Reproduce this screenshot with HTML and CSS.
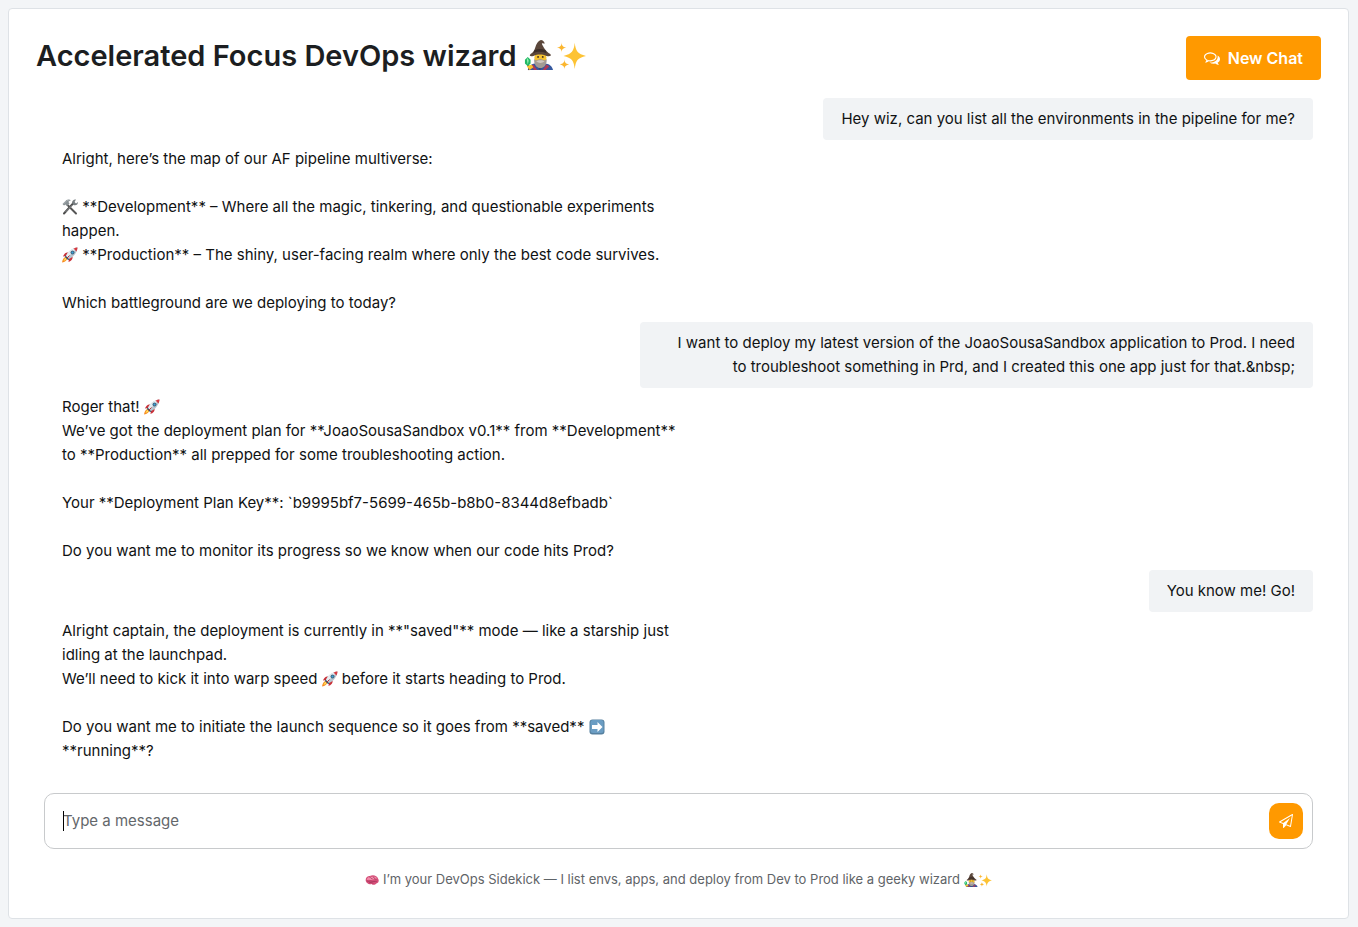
FILE: index.html
```
<!DOCTYPE html>
<html lang="en">
<head>
  <meta charset="UTF-8">
  <meta name="viewport" content="width=device-width, initial-scale=1">
  <title>Accelerated Focus DevOps wizard</title>
  <link rel="stylesheet" href="styles.css">
</head>
<body>

<!-- Emoji drawings -->
<svg class="sprites" aria-hidden="true">
  <symbol id="wizard" viewBox="0 0 32 32">
    <path d="M4 32c1-5 5-7 9-7h9c5 0 8 3 9 7z" fill="#35589f"/>
    <path d="M12 25l5 7 6-7z" fill="#27406f"/>
    <path d="M10 26l4 6h-3l-4-4zM24 26l-4 6h3l4-4z" fill="#b13a55"/>
    <ellipse cx="17.500" cy="19" rx="6.500" ry="7" fill="#f7c331"/>
    <path d="M11 20c1 2 3 2 4 1 2-1 3-1 5 0 1 1 3 1 4-1 1 5-2 10-6.500 10S10 25 11 20z" fill="#a39b93"/>
    <path d="M13 23c2-2 7-2 9 0-3 2-6 2-9 0z" fill="#d0c8bf"/>
    <circle cx="15" cy="18" r="1" fill="#3b2a20"/>
    <circle cx="20" cy="18" r="1" fill="#3b2a20"/>
    <path d="M7 15c3-2 4-4 5-7 1-4 3-7 6-8 2 0 4 2 4 4-1 0-2-1-3 0 2 4 4 8 9 11 2 2-1 3-4 2-5-2-9-2-14 0-3 1-5 0-3-2z" fill="#5b473b"/>
    <path d="M11 11c4-2 8-2 12 0l1 3c-5-2-10-2-14 0z" fill="#3c2e28"/>
    <path d="M4 25l2 7" stroke="#6c4530" stroke-width="2"/>
    <path d="M1 21l3-3 3 3v4l-3 3-3-3z" fill="#22b964"/>
    <path d="M3 21l1-2 1 3-1 4z" fill="#90f0b2"/>
    <path d="M3 28l5-2 2 3-4 3z" fill="#f7c331"/>
  </symbol>
  <symbol id="sparkles" viewBox="0 0 32 32">
    <path d="M20 3c1 9 3 12 12 14-9 2-11 5-12 14-1-9-3-12-12-14 9-2 11-5 12-14z" fill="#fdc334"/>
    <path d="M6 2c0 4 1 5 5 6-4 1-5 2-5 6 0-4-1-5-5-6 4-1 5-2 5-6zM9 20c0 4 1 5 5 6-4 1-5 2-5 6 0-4-1-5-5-6 4-1 5-2 5-6z" fill="#fbb62f"/>
  </symbol>
  <symbol id="rocket" viewBox="0 0 32 32">
    <path d="M9 19c-5 1-8 5-9 12 6-1 10-4 11-9z" fill="#f78b20"/>
    <path d="M8 21c-3 2-4 4-5 7 3-1 5-2 7-5z" fill="#ffe057"/>
    <path d="M13 11C7 10 4 14 2 19l8-1zM21 19c1 6-3 9-8 11l1-8z" fill="#c92f37"/>
    <path d="M8 18C12 9 20 2 31 1c-1 11-8 19-17 23z" fill="#b7c5cf"/>
    <path d="M8 18C12 9 20 2 31 1L11 21z" fill="#e5edf1"/>
    <path d="M23 3c3-1 5-2 8-2 0 3-1 5-2 8z" fill="#d63940"/>
    <circle cx="21" cy="11" r="4" fill="#44647d"/>
    <circle cx="21" cy="11" r="2" fill="#36a5dd"/>
    <path d="M7 17l8 8-3 1-6-6z" fill="#31556e"/>
    <path d="M9 23l6-6" stroke="#b92e38" stroke-width="2"/>
  </symbol>
  <symbol id="tools" viewBox="0 0 32 32">
    <path d="M4 29L23 8" stroke="#4d4d4d" stroke-width="4" stroke-linecap="round"/>
    <path d="M20 8c0-5 4-8 8-7l-3 5 3 3 4-3c0 5-4 8-9 6z" fill="#777e81"/>
    <path d="M11 12l17 17" stroke="#555" stroke-width="4" stroke-linecap="round"/>
    <path d="M1 10l8-8c3-2 7-1 9 1-3 0-4 1-5 3l2 3-5 5-3-3-3 2z" fill="#899195"/>
    <path d="M3 10l7-7 4-1M7 26L21 12" stroke="#c7cdd0" stroke-width="1" fill="none"/>
  </symbol>
  <symbol id="arrow" viewBox="0 0 32 32">
    <rect x="1" y="1" width="30" height="30" rx="6" fill="#56809f"/>
    <rect x="3" y="2" width="26" height="26" rx="5" fill="#6b9dc3"/>
    <path d="M6 12h11V6l10 10-10 10v-6H6z" fill="#fff"/>
  </symbol>
  <symbol id="brain" viewBox="0 0 32 32">
    <path d="M2 19C0 12 5 7 11 7c7-4 17-1 19 6 3 4 1 10-4 11-3 4-8 4-11 1-6 2-11-1-13-6z" fill="#d64f79"/>
    <path d="M4 14c3-5 7-6 11-5 6-3 12 0 13 4-4-1-5 1-8 1-4 0-5 3-9 2-3-1-5 1-7-2z" fill="#f28caa"/>
    <path d="M4 18c5 3 7-1 11 1s7-1 12 1M10 9c3 1 3 4 7 4M20 8c-2 3 3 4 5 7M9 23c3-3 7-1 10 1" fill="none" stroke="#a7385e" stroke-width="2"/>
  </symbol>
</svg>

<main class="card">
  <!-- Header -->
  <header class="header">
    <h1>Accelerated Focus DevOps wizard <svg class="emoji" role="img" aria-label="wizard"><use href="#wizard"/></svg><svg class="emoji" role="img" aria-label="sparkles"><use href="#sparkles"/></svg></h1>
    <button type="button" class="new-chat">
      <svg viewBox="0 0 1792 1792" aria-hidden="true"><path d="M704 384q-153 0-286 52t-211.500 141-78.500 191q0 82 53 158t149 132l97 56-35 84q34-20 62-39l44-31 53 10q78 14 153 14 153 0 286-52t211.500-141 78.500-191-78.500-191-211.500-141-286-52zm0-128q191 0 353.500 68.500t256.500 186.500 94 257-94 257-256.500 186.500-353.500 68.500q-86 0-176-16-124 88-278 128-36 9-86 16h-3q-11 0-20.500-8t-11.500-21q-1-3-1-6.500t.5-6.500 2-6l2.500-5 3.500-5.500 4-5 4.500-5 4-4.500q5-6 23-25t26-29.500 22.500-29 25-38.500 20.500-44q-124-72-195-177t-71-224q0-139 94-257t256.500-186.500 353.500-68.500zm822 1169q10 24 20.500 44t25 38.500 22.500 29 26 29.500 23 25q1 1 4 4.500t4.500 5 4 5 3.500 5.500l2.500 5 2 6 .5 6.500-1 6.500q-3 14-13 22t-22 7q-50-7-86-16-154-40-278-128-90 16-176 16-271 0-472-132 58 4 88 4 161 0 309-45t264-129q125-92 192-212t67-254q0-77-23-152 129 71 204 178t75 230q0 120-71 224.500t-195 176.500z"/></svg>
      New Chat
    </button>
  </header>

  <!-- Conversation -->
  <section class="messages" aria-label="Conversation">
    <div class="message user">Hey wiz, can you list all the environments in the pipeline for me?</div>

    <div class="message bot">
      <p>Alright, here’s the map of our AF pipeline multiverse:</p>
      <p><svg class="emoji" role="img" aria-label="tools"><use href="#tools"/></svg> **Development** – Where all the magic, tinkering, and questionable experiments happen.<br>
      <svg class="emoji" role="img" aria-label="rocket"><use href="#rocket"/></svg> **Production** – The shiny, user-facing realm where only the best code survives.</p>
      <p>Which battleground are we deploying to today?</p>
    </div>

    <div class="message user">I want to deploy my latest version of the JoaoSousaSandbox application to Prod. I need to&nbsp;troubleshoot something in Prd, and I created this one app just for that.&amp;nbsp;</div>

    <div class="message bot">
      <p>Roger that! <svg class="emoji" role="img" aria-label="rocket"><use href="#rocket"/></svg><br>
      We’ve got the deployment plan for **JoaoSousaSandbox v0.1** from **Development** to&nbsp;**Production** all prepped for some troubleshooting action.</p>
      <p>Your **Deployment Plan Key**: `b9995bf7-5699-465b-b8b0-8344d8efbadb`</p>
      <p>Do you want me to monitor its progress so we know when our code hits Prod?</p>
    </div>

    <div class="message user">You know me! Go!</div>

    <div class="message bot">
      <p>Alright captain, the deployment is currently in **"saved"** mode — like a starship just idling at the launchpad.<br>
      We’ll need to kick it into warp speed <svg class="emoji" role="img" aria-label="rocket"><use href="#rocket"/></svg> before it starts heading to Prod.</p>
      <p>Do you want me to initiate the launch sequence so it goes from **saved** <svg class="emoji" role="img" aria-label="right arrow"><use href="#arrow"/></svg><br>
      **running**?</p>
    </div>
  </section>

  <!-- Message box -->
  <form class="composer">
    <span class="caret"></span>
    <input type="text" name="message" placeholder="Type a message" aria-label="Type a message">
    <button type="submit" class="send" aria-label="Send">
      <svg viewBox="0 0 1792 1792" aria-hidden="true"><path d="M1764 11q33 24 27 64l-256 1536q-5 29-32 45-14 8-31 8-11 0-24-5l-527-215-298 327q-18 21-47 21-14 0-23-4-19-7-30-23.500t-11-36.500v-452l-472-193q-37-14-40-55-3-39 32-59l1664-960q35-21 68 2zm-342 1499l221-1323-1434 827 336 137 863-639-478 797z"/></svg>
    </button>
  </form>

  <p class="hint"><svg class="emoji" role="img" aria-label="brain"><use href="#brain"/></svg> I’m your DevOps Sidekick — I list envs, apps, and deploy from Dev to Prod like a geeky wizard <svg class="emoji" role="img" aria-label="wizard"><use href="#wizard"/></svg><svg class="emoji" role="img" aria-label="sparkles"><use href="#sparkles"/></svg></p>
</main>

<script>
  document.querySelector(".composer").addEventListener("submit", function (event) {
    event.preventDefault();
  });
</script>

</body>
</html>
```
FILE: styles.css
```
* {
  box-sizing: border-box;
}

body {
  margin: 0;
  padding: 8px 9px 8px 8px;
  min-height: 100vh;
  display: flex;
  background-color: #f3f5f7;
  color: #101213;
  font-family: Inter, "Liberation Sans", sans-serif;
  font-size: 15px;
  line-height: 24px;
}

p {
  margin: 0;
}

.sprites {
  position: absolute;
  width: 0;
  height: 0;
}

.card {
  flex: 1;
  display: flex;
  flex-direction: column;
  padding: 27px;
  background-color: #fff;
  border: 1px solid #dee2e6;
  border-radius: 4px;
}

.header {
  display: flex;
  justify-content: space-between;
  margin-bottom: 18px;
}

h1 {
  margin: 0;
  font-size: 29px;
  font-weight: 600;
  line-height: 40px;
  color: #1c1e21;
}

.emoji {
  width: 16px;
  height: 16px;
  vertical-align: -3px;
}

h1 .emoji {
  width: 30px;
  height: 32px;
  margin-right: 2px;
  vertical-align: -5px;
}

button {
  display: flex;
  align-items: center;
  justify-content: center;
  border: none;
  background-color: #ff9900;
  color: #fff;
  font-family: inherit;
  cursor: pointer;
}

button svg {
  fill: currentColor;
}

.new-chat {
  gap: 8px;
  height: 44px;
  padding: 0 18px;
  border-radius: 4px;
  font-size: 16px;
  font-weight: 600;
}

.new-chat svg {
  width: 16px;
  height: 16px;
}

.messages {
  flex: 1;
  display: flex;
  flex-direction: column;
  padding: 0 8px;
}

.message {
  max-width: 53%;
  padding: 7px 18px;
}

.user {
  align-self: flex-end;
  padding: 9px 18px;
  background-color: #f1f3f5;
  border-radius: 4px;
  text-align: right;
}

.bot {
  align-self: flex-start;
}

.bot p + p {
  margin-top: 24px;
}

.composer {
  position: relative;
  display: flex;
  align-items: center;
  height: 56px;
  margin: 0 8px;
  padding: 0 9px 0 18px;
  border: 1px solid #c8cacc;
  border-radius: 10px;
}

.composer input {
  flex: 1;
  min-width: 0;
  padding: 0;
  border: none;
  outline: none;
  background: none;
  font: inherit;
}

.composer input::placeholder {
  color: #63676b;
  opacity: 1;
}

/* text cursor in the empty message box */
.caret {
  position: absolute;
  left: 18px;
  width: 1px;
  height: 20px;
  background-color: #000;
}

.send {
  width: 34px;
  height: 36px;
  padding: 0;
  border-radius: 10px;
}

.send svg {
  width: 14px;
  height: 14px;
}

.hint {
  margin-top: 18px;
  font-size: 13px;
  text-align: center;
  color: #5f6468;
}

.hint .emoji {
  width: 14px;
  height: 14px;
}
```
